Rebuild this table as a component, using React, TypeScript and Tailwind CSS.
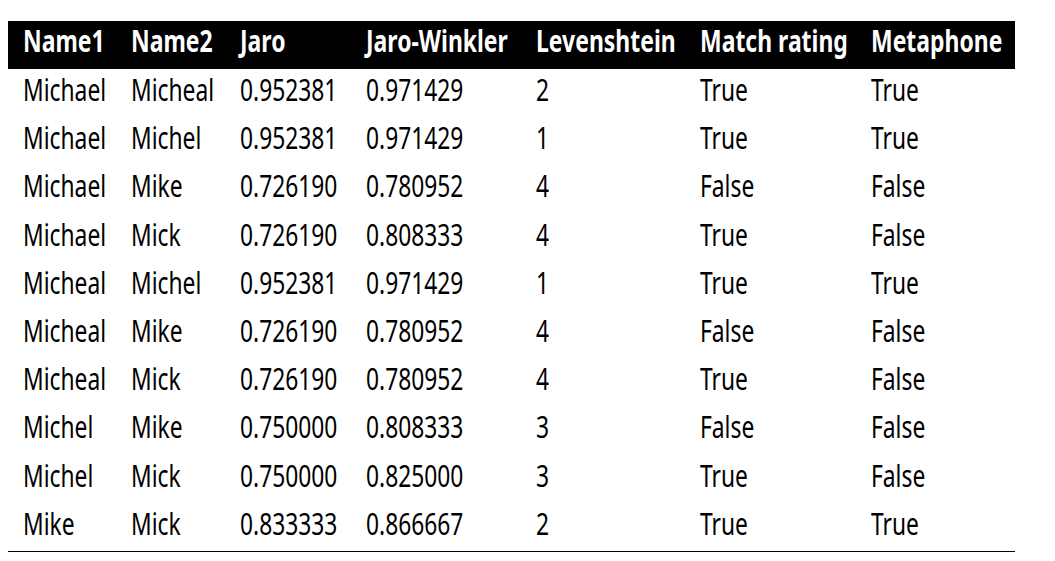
const header = ["Name1", "Name2", "Jaro", "Jaro-Winkler", "Levenshtein", "Match rating", "Metaphone"];

const rows: string[][] = [
  ["Michael", "Micheal", "0.952381", "0.971429", "2", "True", "True"],
  ["Michael", "Michel", "0.952381", "0.971429", "1", "True", "True"],
  ["Michael", "Mike", "0.726190", "0.780952", "4", "False", "False"],
  ["Michael", "Mick", "0.726190", "0.808333", "4", "True", "False"],
  ["Micheal", "Michel", "0.952381", "0.971429", "1", "True", "True"],
  ["Micheal", "Mike", "0.726190", "0.780952", "4", "False", "False"],
  ["Micheal", "Mick", "0.726190", "0.780952", "4", "True", "False"],
  ["Michel", "Mike", "0.750000", "0.808333", "3", "False", "False"],
  ["Michel", "Mick", "0.750000", "0.825000", "3", "True", "False"],
  ["Mike", "Mick", "0.833333", "0.866667", "2", "True", "True"],
];

// column edges measured off the figure
const grid = "grid grid-cols-[108px_109px_126px_170px_164px_171px_1fr] pl-[15px]";

const squeeze = "inline-block origin-left whitespace-nowrap";

export default function App() {
  return (
    <div className="h-[561px] w-[1055px] bg-white pl-[8px] pt-[21px] font-['Noto_Sans',sans-serif] text-[30px] leading-none text-black">
      <div className="w-[1007px]">
        <div className={`${grid} h-[48px] items-center bg-black pb-[8px] font-bold text-white`}>
          {header.map((h) => (
            <span key={h} className={`${squeeze} scale-x-[0.765]`}>{h}</span>
          ))}
        </div>
        {rows.map((r, i) => (
          <div key={i} className={`${grid} h-[48.2px] items-center pb-[6px]`}>
            {r.map((c, j) => (
              <span key={j} className={`${squeeze} scale-x-[0.76]`}>{c}</span>
            ))}
          </div>
        ))}
        <div className="h-px bg-black" />
      </div>
    </div>
  );
}
